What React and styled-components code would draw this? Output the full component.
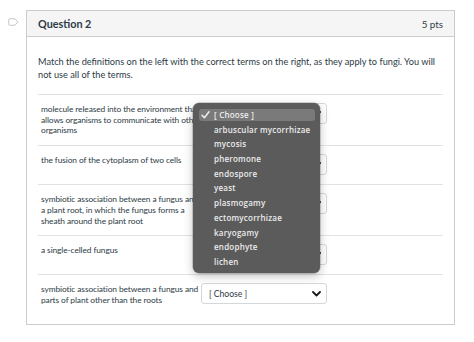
import React from "react";
import styled, { createGlobalStyle } from "styled-components";

const Global = createGlobalStyle`
  html, body { margin: 0; padding: 0; background: #fff; }
  body { font-family: Lato, "Open Sans", sans-serif; color: #2d3b45; }
  * { box-sizing: border-box; }
`;

const Page = styled.div`
  display: flex;
  align-items: flex-start;
  padding: 10px 0 0 8px;
  gap: 7px;
  width: 474px;
  height: 342px;
`;

const TagIcon = styled.svg`
  margin-top: 8px;
  flex: none;
`;

const Card = styled.div`
  position: relative;
  width: 429px;
  height: 315px;
  border: 1px solid #c7cdd1;
`;

const Header = styled.div`
  display: flex;
  align-items: center;
  justify-content: space-between;
  height: 26px;
  padding: 0 11px 0 11px;
  background: #f5f5f5;
  border-bottom: 1px solid #c7cdd1;
`;

const Title = styled.div`
  font-weight: 700;
  font-size: 10.8px;
  color: #2d3b45;
`;

const Points = styled.div`
  font-size: 9.8px;
  color: #2d3b45;
`;

const Body = styled.div`
  padding: 18px 11px 0 11px;
`;

const Intro = styled.p`
  margin: 0 0 13px 0;
  font-size: 9.2px;
  line-height: 13px;
  color: #2d3b45;
`;

const Row = styled.div`
  display: flex;
  align-items: flex-start;
  gap: 4px;
  padding: 8px 0 9px 3px;
  border-top: 1px solid #dfe3e6;
`;

const Definition = styled.div`
  width: 156px;
  flex: none;
  font-size: 8.4px;
  letter-spacing: -0.1px;
  line-height: 10.7px;
  padding-top: 1px;
  color: #2d3b45;
`;

const Line = styled.div`
  white-space: nowrap;
`;

const Select = styled.div`
  display: flex;
  align-items: center;
  justify-content: space-between;
  width: 126px;
  height: 21px;
  padding: 0 5px 0 7px;
  border: 1px solid #d4d8db;
  border-radius: 3px;
  background: #fff;
  font-size: 8.6px;
  color: #2d3b45;
`;

const Dropdown = styled.div`
  position: absolute;
  left: 166px;
  top: 92px;
  width: 127px;
  height: 170px;
  padding: 6px 5px 5px 6px;
  background: #5b5b5b;
  border-radius: 6px;
  box-shadow: 0 3px 10px rgba(0, 0, 0, 0.25), 0 0 0 0.5px rgba(0, 0, 0, 0.3);
  display: flex;
  flex-direction: column;
  gap: 2.7px;
`;

const Option = styled.div`
  position: relative;
  height: 12px;
  line-height: 12px;
  padding-left: 15px;
  border-radius: 3px;
  background: ${(p) => (p.$active ? "#7a7a7a" : "transparent")};
  color: #ececec;
  font-family: "Open Sans", Lato, sans-serif;
  font-weight: 600;
  font-size: 8px;
  letter-spacing: 0.22px;
  white-space: nowrap;
`;

const Check = styled.svg`
  position: absolute;
  left: 2px;
  top: 2px;
`;

const Chevron = () => (
  <svg width="9" height="6" viewBox="0 0 9 6">
    <path d="M1 1 L4.5 4.5 L8 1" fill="none" stroke="#1a1a1a" strokeWidth="1.8" strokeLinecap="round" strokeLinejoin="round" />
  </svg>
);

const rows = [
  ["molecule released into the environment that", "allows organisms to communicate with other", "organisms"],
  ["the fusion of the cytoplasm of two cells"],
  ["symbiotic association between a fungus and", "a plant root, in which the fungus forms a", "sheath around the plant root"],
  ["a single-celled fungus"],
  ["symbiotic association between a fungus and", "parts of plant other than the roots"],
];

const options = [
  "[ Choose ]",
  "arbuscular mycorrhizae",
  "mycosis",
  "pheromone",
  "endospore",
  "yeast",
  "plasmogamy",
  "ectomycorrhizae",
  "karyogamy",
  "endophyte",
  "lichen",
];

export default function App() {
  return (
    <>
      <Global />
      <Page>
        <TagIcon width="11" height="8" viewBox="0 0 11 8">
          <path d="M1.5 0.75 H7 L9.8 4 L7 7.25 H1.5 Q0.75 7.25 0.75 6.5 V1.5 Q0.75 0.75 1.5 0.75 Z" fill="#fff" stroke="#c4c8cb" strokeWidth="1" strokeLinejoin="round" />
        </TagIcon>
        <Card>
          <Header>
            <Title>Question 2</Title>
            <Points>5 pts</Points>
          </Header>
          <Body>
            <Intro>
              Match the definitions on the left with the correct terms on the right, as they apply to fungi. You will
              not use all of the terms.
            </Intro>
            {rows.map((lines, i) => (
              <Row key={i}>
                <Definition>
                  {lines.map((l) => (
                    <Line key={l}>{l}</Line>
                  ))}
                </Definition>
                <Select>
                  <span>[ Choose ]</span>
                  <Chevron />
                </Select>
              </Row>
            ))}
          </Body>
          <Dropdown>
            {options.map((o, i) => (
              <Option key={o} $active={i === 0}>
                {i === 0 && (
                  <Check width="9" height="8" viewBox="0 0 9 8">
                    <path d="M1 4.2 L3.4 6.8 L8 0.8" fill="none" stroke="#f2f2f2" strokeWidth="1.4" strokeLinecap="round" strokeLinejoin="round" />
                  </Check>
                )}
                {o}
              </Option>
            ))}
          </Dropdown>
        </Card>
      </Page>
    </>
  );
}
